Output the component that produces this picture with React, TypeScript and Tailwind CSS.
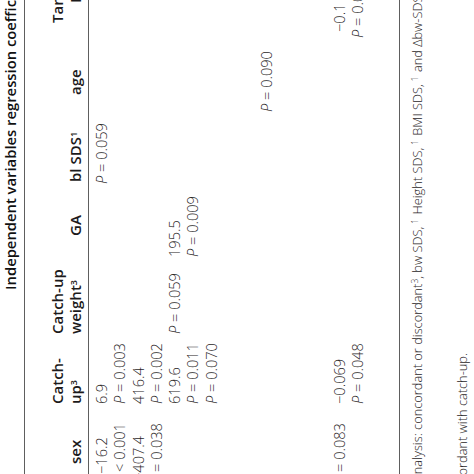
import React from "react";

type Cell = React.ReactNode;

const P = ({ op = "=", v }: { op?: string; v: string }) => (
  <span>
    <i>P</i> {op} {v}
  </span>
);

const Line = ({ children, cls = "" }: { children?: Cell; cls?: string }) => (
  <div className={`h-[18.3px] leading-[18.3px] whitespace-nowrap ${cls}`}>
    {children ?? "\u00a0"}
  </div>
);

type Col = {
  w: string;
  h1?: Cell;
  h2?: Cell;
  hcls: string;
  body: Record<number, { t: Cell; cls?: string }>;
};

const cols: Col[] = [
  {
    w: "w-[80px]",
    h2: "sex",
    hcls: "pl-[20px]",
    body: {
      1: { t: "\u221216.2", cls: "pl-[10px]" },
      2: { t: <P op="<" v="0.001" /> },
      3: { t: "\u2212407.4", cls: "pl-[3px]" },
      4: { t: <P v="0.038" /> },
      14: { t: <P v="0.083" /> },
    },
  },
  {
    w: "w-[70px]",
    h1: "Catch-",
    h2: (
      <>
        up<sup className="text-[9px]">3</sup>
      </>
    ),
    hcls: "pl-0",
    body: {
      1: { t: "6.9" },
      2: { t: <P v="0.003" /> },
      3: { t: "416.4" },
      4: { t: <P v="0.002" /> },
      5: { t: "619.6" },
      6: { t: <P v="0.011" /> },
      7: { t: <P v="0.070" /> },
      14: { t: "\u22120.069" },
      15: { t: <P v="0.048" /> },
    },
  },
  {
    w: "w-[77px]",
    h1: "Catch-up",
    h2: (
      <>
        weight<sup className="text-[9px]">3</sup>
      </>
    ),
    hcls: "pl-0",
    body: {
      5: { t: <P v="0.059" /> },
    },
  },
  {
    w: "w-[73px]",
    h2: "GA",
    hcls: "pl-[21px]",
    body: {
      5: { t: "195.5" },
      6: { t: <P v="0.009" /> },
    },
  },
  {
    w: "w-[72px]",
    h2: (
      <>
        bl SDS<sup className="text-[9px]">1</sup>
      </>
    ),
    hcls: "pl-[2px]",
    body: {
      1: { t: <P v="0.059" /> },
    },
  },
  {
    w: "w-[74px]",
    h2: "age",
    hcls: "pl-[17px]",
    body: {
      10: { t: <P v="0.090" /> },
    },
  },
  {
    w: "w-[90px]",
    h1: "Tanner",
    h2: <span className="pl-[20px]">PH</span>,
    hcls: "pl-[15px]",
    body: {
      14: { t: "\u22120.1", cls: "pl-[6px]" },
      15: { t: <P v="0.061" /> },
    },
  },
];

const lineIdx = Array.from({ length: 16 }, (_, i) => i + 1);

const Sup = ({ n }: { n: string }) => (
  <sup className="text-[8.5px] pl-[3px] pr-[1px]">{n}</sup>
);

export default function App() {
  return (
    <div className="w-[474px] h-[474px] overflow-hidden bg-white relative">
      <div
        className="w-[474px] h-[474px] -rotate-90 text-[#2a2627]"
        style={{ fontFamily: '"Open Sans", "Noto Sans", sans-serif' }}
      >
        {/* title */}
        <div className="h-[24px] pl-[184px] whitespace-nowrap text-[14.8px] leading-[20px] font-semibold text-[#111]">
          Independent variables regression coefficients (B) and P values
        </div>
        <div className="h-px w-[560px] -ml-[20px] bg-[#5e5e5e]" />
        {/* header */}
        <div className="flex h-[63px] items-end pb-[4px] -ml-[10px] text-[15px] font-semibold leading-[18px] text-[#1c1a1b]">
          {cols.map((c, i) => (
            <div key={i} className={`${c.w} shrink-0 ${c.hcls} whitespace-nowrap`}>
              <div className="h-[18px]">{c.h1 ?? "\u00a0"}</div>
              <div className="h-[18px]">{c.h2 ?? "\u00a0"}</div>
            </div>
          ))}
        </div>
        <div className="h-px w-[560px] -ml-[20px] bg-[#5e5e5e]" />
        {/* body */}
        <div className="flex h-[310px] pt-[3px] -ml-[10px] text-[14.6px] font-light">
          {cols.map((c, i) => (
            <div key={i} className={`${c.w} shrink-0`}>
              {lineIdx.map((n) => (
                <Line key={n} cls={c.body[n]?.cls ?? ""}>
                  {c.body[n]?.t}
                </Line>
              ))}
            </div>
          ))}
        </div>
        <div className="h-px w-[560px] -ml-[20px] bg-[#5e5e5e]" />
        {/* footnotes */}
        <div className="pt-[10px] text-[12.8px] leading-[15px] whitespace-nowrap font-light">
          <div className="-ml-[7px]">
            analysis: concordant or discordant<sup className="text-[8.5px]">3</sup>, bw SDS,
            <Sup n="1" /> Height SDS,
            <Sup n="1" /> BMI SDS,
            <Sup n="1" /> and {"\u0394"}bw-SDS<Sup n="1" /> were included.
          </div>
          <div>{"\u00a0"}</div>
          <div>{"\u00a0"}</div>
          <div className="-ml-[24px]">discordant with catch-up.</div>
        </div>
      </div>
    </div>
  );
}
